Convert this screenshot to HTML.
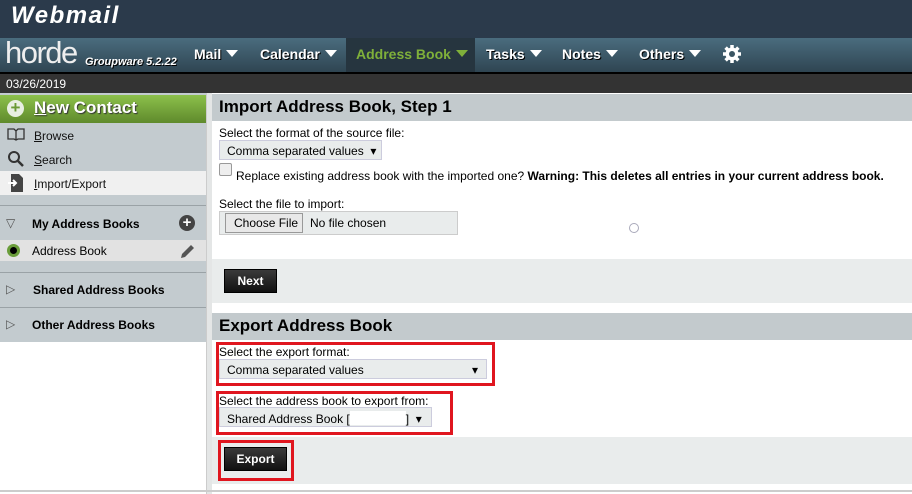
<!DOCTYPE html><html><head><style>
*{margin:0;padding:0;box-sizing:border-box}
body{width:912px;height:494px;overflow:hidden;background:#fff;font-family:"Liberation Sans",Arial,sans-serif;font-size:12px;color:#000;position:relative}
.a{position:absolute}
.nav{top:38px;left:0;width:912px;height:34px;background:linear-gradient(#4a6c7e,#2f4552)}
.ni{position:absolute;top:46px;color:#fff;font-weight:bold;font-size:14px;text-shadow:1px 1px 0 #000}
.tri{display:inline-block;width:0;height:0;border-left:6px solid transparent;border-right:6px solid transparent;border-top:7px solid #fff;margin-left:5px;vertical-align:2px}
.sel{position:absolute;background:#e9ecec;border:1px solid #ccd;height:20px;font-size:12px;padding:3px 0 0 7px}
.btn{position:absolute;background:linear-gradient(#3a3a3a,#111);color:#fff;font-weight:bold;border:1px solid #000;text-align:center;font-size:12px}
.red{position:absolute;border:3px solid #e0161f}
</style></head><body>
<div class="a" style="top:0;left:0;width:912px;height:38px;background:#2b3a4b"></div>
<div class="a" style="top:2px;left:11px;color:#fff;font-size:24px;font-weight:bold;font-style:italic;letter-spacing:1.5px">Webmail</div>
<div class="nav a"></div>
<div class="a" style="top:38px;left:346px;width:129px;height:34px;background:#26353f"></div>
<div class="a" style="top:35px;left:5px;color:#eee;font-size:31px;letter-spacing:-1.5px">horde</div>
<div class="a" style="top:56px;left:85px;color:#fff;font-size:11px;font-weight:bold;font-style:italic;text-shadow:1px 1px 0 #000">Groupware 5.2.22</div>
<div class="ni" style="left:194px">Mail<span class="tri"></span></div>
<div class="ni" style="left:260px">Calendar<span class="tri"></span></div>
<div class="ni" style="left:356px;color:#7fb03a;text-shadow:none">Address Book<span class="tri" style="border-top-color:#7fb03a"></span></div>
<div class="ni" style="left:486px">Tasks<span class="tri"></span></div>
<div class="ni" style="left:562px">Notes<span class="tri"></span></div>
<div class="ni" style="left:639px">Others<span class="tri"></span></div>
<svg class="a" style="left:722px;top:44px" width="20" height="20" viewBox="0 0 20 20"><g fill="#fff"><circle cx="10" cy="10" r="6.5"/><g stroke="#fff" stroke-width="3.5"><line x1="10" y1="1" x2="10" y2="19"/><line x1="1" y1="10" x2="19" y2="10"/><line x1="3.6" y1="3.6" x2="16.4" y2="16.4"/><line x1="16.4" y1="3.6" x2="3.6" y2="16.4"/></g></g><circle cx="10" cy="10" r="3" fill="#3a5563"/></svg>
<div class="a" style="top:72px;left:0;width:912px;height:2px;background:#000"></div>
<div class="a" style="top:74px;left:0;width:912px;height:19px;background:#333"></div>
<div class="a" style="top:77px;left:6px;color:#fff;font-size:12px">03/26/2019</div>
<div class="a" style="top:93px;left:0;width:206px;height:249px;background:#c3cbcf"></div>
<div class="a" style="top:93px;left:206px;width:6px;height:401px;background:#e4e6e6;border-left:1px solid #ccc"></div>
<div class="a" style="top:95px;left:0;width:206px;height:28px;background:linear-gradient(#8cc04b,#5f8a2c)"></div>
<div class="a" style="top:100px;left:7px;width:17px;height:17px;border-radius:50%;background:#e8efe2;color:#6a9a35;font-weight:bold;font-size:17px;line-height:16px;text-align:center">+</div>
<div class="a" style="top:98px;left:34px;color:#fff;font-weight:bold;font-size:17px;text-shadow:1px 1px 1px #333"><u>N</u>ew Contact</div>
<svg class="a" style="left:7px;top:127px" width="18" height="14"><path d="M1 2h6l2 2 2-2h6v10h-6l-2 1-2-1H1z M9 4v9" fill="none" stroke="#333" stroke-width="1.3"/></svg>
<div class="a" style="top:129px;left:34px;font-size:12px;color:#111"><u>B</u>rowse</div>
<svg class="a" style="left:7px;top:150px" width="18" height="18"><circle cx="7" cy="7" r="5" fill="none" stroke="#333" stroke-width="2"/><line x1="11" y1="11" x2="16" y2="16" stroke="#333" stroke-width="2.5"/></svg>
<div class="a" style="top:153px;left:34px;color:#111"><u>S</u>earch</div>
<div class="a" style="top:171px;left:0;width:206px;height:24px;background:#f0f0f0"></div>
<svg class="a" style="left:8px;top:173px" width="16" height="20"><path d="M3 1h8l4 4v14H3z" fill="#444"/><path d="M0 10h8M5 7l3 3-3 3" stroke="#fff" stroke-width="2" fill="none"/></svg>
<div class="a" style="top:177px;left:34px;color:#111"><u>I</u>mport/Export</div>
<div class="a" style="top:205px;left:0;width:206px;height:1px;background:#9aa2a6"></div>
<div class="a" style="top:216px;left:6px;color:#555;font-size:12px">▽</div>
<div class="a" style="top:217px;left:32px;font-weight:bold">My Address Books</div>
<div class="a" style="top:215px;left:179px;width:16px;height:16px;border-radius:50%;background:#444;color:#fff;font-weight:bold;font-size:15px;line-height:15px;text-align:center">+</div>
<div class="a" style="top:240px;left:0;width:206px;height:21px;background:#e2e2e2"></div>
<div class="a" style="top:244px;left:7px;width:13px;height:13px;border-radius:50%;background:#000;border:3px solid #6a9d3a"></div>
<div class="a" style="top:244px;left:32px">Address Book</div>
<svg class="a" style="left:179px;top:242px" width="18" height="18"><path d="M2 16l1-4 9-9 3 3-9 9z" fill="#555"/></svg>
<div class="a" style="top:272px;left:0;width:206px;height:1px;background:#9aa2a6"></div>
<div class="a" style="top:282px;left:6px;color:#555">▷</div>
<div class="a" style="top:283px;left:33px;font-weight:bold">Shared Address Books</div>
<div class="a" style="top:307px;left:0;width:206px;height:1px;background:#9aa2a6"></div>
<div class="a" style="top:317px;left:6px;color:#555">▷</div>
<div class="a" style="top:318px;left:32px;font-weight:bold">Other Address Books</div>
<div class="a" style="top:94px;left:212px;width:700px;height:27px;background:#c3cacd"></div>
<div class="a" style="top:97px;left:219px;font-weight:bold;font-size:17px">Import Address Book, Step 1</div>
<div class="a" style="top:126px;left:219px">Select the format of the source file:</div>
<div class="sel" style="top:140px;left:219px;width:163px">Comma separated values&nbsp;&nbsp;▾</div>
<div class="a" style="top:163px;left:219px;width:13px;height:13px;border:1px solid #999;border-radius:2px;background:#eee"></div>
<div class="a" style="top:169px;left:236px">Replace existing address book with the imported one? <b>Warning: This deletes all entries in your current address book.</b></div>
<div class="a" style="top:197px;left:219px">Select the file to import:</div>
<div class="a" style="top:211px;left:219px;width:239px;height:24px;background:#e9ecec;border:1px solid #ccc"></div>
<div class="a" style="top:213px;left:225px;width:78px;height:20px;background:#e8e8e8;border:1px solid #999;font-size:12px;padding:2px 0 0 8px">Choose File</div>
<div class="a" style="top:216px;left:310px">No file chosen</div>
<div class="a" style="top:223px;left:629px;width:10px;height:10px;border-radius:50%;border:1px solid #aab"></div>
<div class="a" style="top:259px;left:212px;width:700px;height:44px;background:#e9ecec"></div>
<div class="btn" style="top:269px;left:224px;width:53px;height:24px;line-height:22px">Next</div>
<div class="a" style="top:313px;left:212px;width:700px;height:27px;background:#c3cacd"></div>
<div class="a" style="top:316px;left:219px;font-weight:bold;font-size:17px">Export Address Book</div>
<div class="a" style="top:345px;left:219px">Select the export format:</div>
<div class="sel" style="top:359px;left:219px;width:268px">Comma separated values<span style="position:absolute;right:8px">▾</span></div>
<div class="a" style="top:394px;left:219px">Select the address book to export from:</div>
<div class="sel" style="top:407px;left:219px;width:213px">Shared Address Book [<span style="display:inline-block;width:56px;background:#fff;height:14px;vertical-align:-2px"></span>]&nbsp;&nbsp;▾</div>
<div class="a" style="top:437px;left:212px;width:700px;height:47px;background:#e9ecec"></div>
<div class="btn" style="top:447px;left:224px;width:63px;height:24px;line-height:22px">Export</div>
<div class="red" style="top:342px;left:216px;width:279px;height:44px"></div>
<div class="red" style="top:391px;left:216px;width:237px;height:44px"></div>
<div class="red" style="top:440px;left:218px;width:76px;height:41px"></div>
<div class="a" style="top:490px;left:0;width:912px;height:2px;background:#ccc"></div>
</body></html>
